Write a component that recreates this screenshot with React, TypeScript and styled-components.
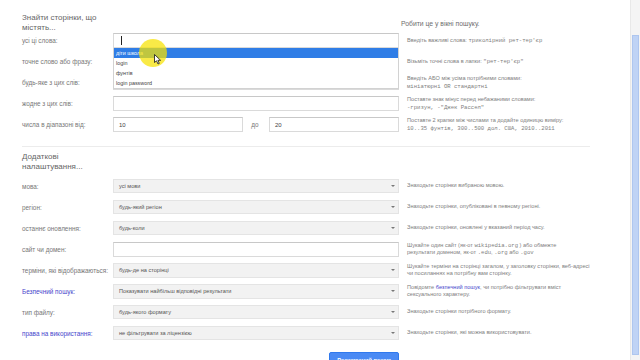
import React from 'react'
import styled, { createGlobalStyle } from 'styled-components'

const GlobalStyle = createGlobalStyle`
  html, body {
    margin: 0;
    padding: 0;
    background: #fff;
  }
  body {
    font-family: 'Liberation Sans', Arial, sans-serif;
  }
`

const Page = styled.div`
  display: flex;
  width: 640px;
  height: 360px;
  overflow: hidden;
  background: #fff;
`

const Main = styled.div`
  flex: 1;
  position: relative;
  padding: 13px 0 0 22px;
`

const Scrollbar = styled.div`
  width: 7px;
  background: #f4f4f4;
  border-left: 1px solid #e8e8e8;
  padding: 35px 1px 5px 1px;
  display: flex;
`

const Thumb = styled.div`
  flex: 1;
  background: #bfd3f5;
  border: 1px solid #aec6ef;
`

const Head = styled.div`
  display: grid;
  grid-template-columns: 377px 1fr;
  align-items: center;
  height: 20px;
`

const Title = styled.div`
  width: 88px;
  font-size: 8px;
  line-height: 10px;
  color: #666;
`

const Hint = styled.div`
  padding-left: 2px;
  font-size: 6.8px;
  color: #6e6e6e;
`

const Rows = styled.div<{ $gap: number }>`
  display: flex;
  flex-direction: column;
  gap: ${(p) => p.$gap}px;
  margin-top: ${(p) => (p.$gap === 6 ? 0 : 7)}px;
`

const Row = styled.div<{ $h: number }>`
  display: grid;
  grid-template-columns: 91px 286px 1fr;
  align-items: center;
  height: ${(p) => p.$h}px;
`

const Label = styled.div<{ $link?: boolean }>`
  font-size: 6.4px;
  color: ${(p) => (p.$link ? '#4646cc' : '#777')};
  white-space: nowrap;
`

const Field = styled.div`
  position: relative;
  height: 100%;
`

const Input = styled.div`
  box-sizing: border-box;
  height: 100%;
  background: #fff;
  border: 1px solid #dadada;
  border-top-color: #c8c8c8;
  font-size: 6px;
  color: #444;
  display: flex;
  align-items: center;
  padding-left: 5px;
`

const Caret = styled.span`
  width: 1px;
  height: 9px;
  background: #222;
  margin-left: 2px;
`

const Select = styled.div`
  box-sizing: border-box;
  height: 100%;
  background: #f2f2f2;
  border: 1px solid #e4e4e4;
  font-size: 5.6px;
  color: #555;
  display: flex;
  align-items: center;
  justify-content: space-between;
  padding: 0 3px 0 5px;

  &::after {
    content: '';
    border-left: 2px solid transparent;
    border-right: 2px solid transparent;
    border-top: 2px solid #777;
  }
`

const Range = styled.div`
  display: flex;
  align-items: center;
  height: 100%;

  & > div {
    width: 130px;
  }
`

const To = styled.span`
  font-size: 6.4px;
  color: #777;
  flex: 1;
  text-align: center;
  padding-right: 2px;
`

const Menu = styled.div`
  position: absolute;
  top: 100%;
  left: 0;
  right: 0;
  background: #fff;
  border: 1px solid #d2d2d2;
  border-top: none;
  z-index: 2;
`

const Item = styled.div<{ $active?: boolean }>`
  height: 10px;
  line-height: 10px;
  padding-left: 2px;
  font-size: 5.4px;
  color: ${(p) => (p.$active ? '#fff' : '#444')};
  background: ${(p) => (p.$active ? '#2f7de6' : '#fff')};
`

const Help = styled.div`
  padding-left: 8px;
  font-size: 5.6px;
  line-height: 7.4px;
  color: #808080;
  white-space: nowrap;
`

const Mono = styled.span`
  font-family: 'Liberation Mono', 'Courier New', monospace;
  font-size: 5.6px;
`

const Link = styled.span`
  color: #4646cc;
`

const Divider = styled.div`
  width: 568px;
  height: 1px;
  background: #ececec;
  margin: 14px 0 5px;
`

const Footer = styled.div`
  display: grid;
  grid-template-columns: 91px 286px;
  margin-top: 12px;
`

const SubmitButton = styled.div`
  grid-column: 2;
  justify-self: end;
  width: 70px;
  height: 16px;
  background: #4a8af4;
  border: 1px solid #3079ed;
  border-radius: 2px;
  color: #fff;
  font-size: 5.6px;
  font-weight: bold;
  display: flex;
  align-items: center;
  justify-content: center;
  box-sizing: border-box;
`

const Spot = styled.div`
  position: absolute;
  left: 139px;
  top: 39px;
  width: 28px;
  height: 28px;
  border-radius: 50%;
  background: rgba(246, 226, 0, 0.72);
  z-index: 3;
`

const Pointer = styled.svg`
  position: absolute;
  left: 154px;
  top: 54px;
  z-index: 4;
`

const App: React.FC = () => {
  return (
    <Page>
      <GlobalStyle />
      <Main>
        <Head>
          <Title>Знайти сторінки, що містять...</Title>
          <Hint>Робити це у вікні пошуку.</Hint>
        </Head>
        <Rows $gap={6}>
          <Row $h={15}>
            <Label>усі ці слова:</Label>
            <Field>
              <Input>
                <Caret />
              </Input>
              <Menu>
                <Item $active>діти школа</Item>
                <Item>login</Item>
                <Item>фунтів</Item>
                <Item>login password</Item>
              </Menu>
            </Field>
            <Help>
              Введіть важливі слова: <Mono>триколірний рет-тер'єр</Mono>
            </Help>
          </Row>
          <Row $h={15}>
            <Label>точне слово або фразу:</Label>
            <Field>
              <Input />
            </Field>
            <Help>
              Візьміть точні слова в лапки: <Mono>"рет-тер'єр"</Mono>
            </Help>
          </Row>
          <Row $h={15}>
            <Label>будь-яке з цих слів:</Label>
            <Field>
              <Input />
            </Field>
            <Help>
              Введіть АБО між усіма потрібними словами:
              <br />
              <Mono>мініатюрні OR стандартні</Mono>
            </Help>
          </Row>
          <Row $h={15}>
            <Label>жодне з цих слів:</Label>
            <Field>
              <Input />
            </Field>
            <Help>
              Поставте знак мінус перед небажаними словами:
              <br />
              <Mono>-гризун, -"Джек Рассел"</Mono>
            </Help>
          </Row>
          <Row $h={15}>
            <Label>числа в діапазоні від:</Label>
            <Range>
              <Input>10</Input>
              <To>до</To>
              <Input>20</Input>
            </Range>
            <Help>
              Поставте 2 крапки між числами та додайте одиницю виміру:
              <br />
              <Mono>10..35 фунтів, 300..500 дол. США, 2010..2011</Mono>
            </Help>
          </Row>
        </Rows>

        <Divider />

        <Head>
          <Title>Додаткові налаштування...</Title>
        </Head>
        <Rows $gap={7}>
          <Row $h={14}>
            <Label>мова:</Label>
            <Select>усі мови</Select>
            <Help>Знаходьте сторінки вибраною мовою.</Help>
          </Row>
          <Row $h={14}>
            <Label>регіон:</Label>
            <Select>будь-який регіон</Select>
            <Help>Знаходьте сторінки, опубліковані в певному регіоні.</Help>
          </Row>
          <Row $h={14}>
            <Label>останнє оновлення:</Label>
            <Select>будь-коли</Select>
            <Help>Знаходьте сторінки, оновлені у вказаний період часу.</Help>
          </Row>
          <Row $h={14}>
            <Label>сайт чи домен:</Label>
            <Input />
            <Help>
              Шукайте один сайт (як-от <Mono>wikipedia.org</Mono> ) або обмежте
              <br />
              результати доменом, як-от <Mono>.edu</Mono>, <Mono>.org</Mono> або{' '}
              <Mono>.gov</Mono>
            </Help>
          </Row>
          <Row $h={14}>
            <Label>терміни, які відображаються:</Label>
            <Select>будь-де на сторінці</Select>
            <Help>
              Шукайте терміни на сторінці загалом, у заголовку сторінки, веб-адресі
              <br />
              чи посиланнях на потрібну вам сторінку.
            </Help>
          </Row>
          <Row $h={14}>
            <Label $link>Безпечний пошук:</Label>
            <Select>Показувати найбільш відповідні результати</Select>
            <Help>
              Повідомте <Link>безпечний пошук</Link>, чи потрібно фільтрувати вміст
              <br />
              сексуального характеру.
            </Help>
          </Row>
          <Row $h={14}>
            <Label>тип файлу:</Label>
            <Select>будь-якого формату</Select>
            <Help>Знаходьте сторінки потрібного формату.</Help>
          </Row>
          <Row $h={14}>
            <Label $link>права на використання:</Label>
            <Select>не фільтрувати за ліцензією</Select>
            <Help>Знаходьте сторінки, які можна використовувати.</Help>
          </Row>
        </Rows>

        <Footer>
          <SubmitButton>Розширений пошук</SubmitButton>
        </Footer>

        <Spot />
        <Pointer width="8" height="11" viewBox="0 0 8 11">
          <path d="M0.5 0.5 L0.5 8.5 L2.5 6.8 L4 10 L5.3 9.4 L3.9 6.3 L6.6 6.3 Z" fill="#fff" stroke="#111" strokeWidth="0.8" />
        </Pointer>
      </Main>
      <Scrollbar>
        <Thumb />
      </Scrollbar>
    </Page>
  )
}

export default App
